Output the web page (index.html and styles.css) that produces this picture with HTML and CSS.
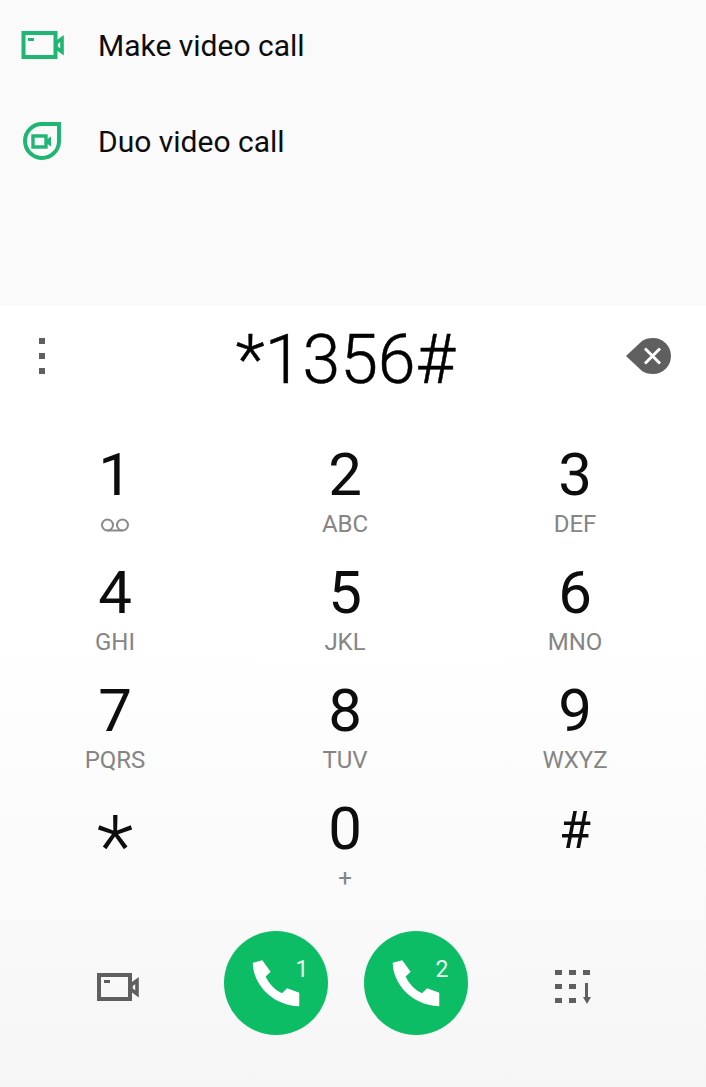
FILE: index.html
```html
<!DOCTYPE html>
<html lang="en">
<head>
    <meta charset="UTF-8">
    <meta name="viewport" content="width=device-width, initial-scale=1.0">
    <title>Dialer</title>
    <link rel="stylesheet" href="styles.css">
</head>
<body>
    <main class="phone">
        <section class="suggestions">
            <div class="suggestion">
                <svg class="suggestion-icon" viewBox="0 0 44 30" width="44" height="30">
                    <rect x="3.5" y="3" width="32" height="24" fill="none" stroke="#1fb573" stroke-width="4"/>
                    <path d="M36 13 L42 8.5 V22 L36 17.5 Z" fill="none" stroke="#1fb573" stroke-width="3.6"/>
                    <rect x="8" y="8" width="6" height="3" fill="#1fb573"/>
                </svg>
                <span>Make video call</span>
            </div>
            <div class="suggestion">
                <svg class="suggestion-icon" viewBox="0 0 44 40" width="44" height="40">
                    <path d="M22 3 H39 V21 A17 17 0 1 1 22 3 Z" fill="none" stroke="#1fb573" stroke-width="4"/>
                    <rect x="13" y="15" width="13" height="11" fill="none" stroke="#1fb573" stroke-width="3.4"/>
                    <path d="M26 19 L31 15.5 V25.5 L26 22 Z" fill="#1fb573"/>
                </svg>
                <span>Duo video call</span>
            </div>
        </section>

        <section class="dialer">
            <div class="number-bar">
                <div class="more-dots"><i></i><i></i><i></i></div>
                <div class="number">*1356#</div>
                <svg class="backspace" viewBox="0 0 46 36" width="46" height="36">
                    <path d="M0 18 L16 3 Q20 0 27 0 A18 18 0 0 1 27 36 Q20 36 16 33 Z" fill="#5f5f5f"/>
                    <path d="M19 10.5 L34 25.5 M34 10.5 L19 25.5" stroke="#fff" stroke-width="3" fill="none"/>
                </svg>
            </div>

            <div class="keypad">
                <div class="key">
                    <span class="digit">1</span>
                    <svg class="voicemail" viewBox="0 0 30 14" width="30" height="14">
                        <circle cx="7.5" cy="7" r="5.5" fill="none" stroke="#8a8a8a" stroke-width="2"/>
                        <circle cx="22.5" cy="7" r="5.5" fill="none" stroke="#8a8a8a" stroke-width="2"/>
                        <path d="M7.5 12.5 H22.5" stroke="#8a8a8a" stroke-width="2"/>
                    </svg>
                </div>
                <div class="key"><span class="digit">2</span><span class="letters">ABC</span></div>
                <div class="key"><span class="digit">3</span><span class="letters">DEF</span></div>
                <div class="key"><span class="digit">4</span><span class="letters">GHI</span></div>
                <div class="key"><span class="digit">5</span><span class="letters">JKL</span></div>
                <div class="key"><span class="digit">6</span><span class="letters">MNO</span></div>
                <div class="key"><span class="digit">7</span><span class="letters">PQRS</span></div>
                <div class="key"><span class="digit">8</span><span class="letters">TUV</span></div>
                <div class="key"><span class="digit">9</span><span class="letters">WXYZ</span></div>
                <div class="key"><span class="digit star">*</span></div>
                <div class="key"><span class="digit">0</span><span class="letters">+</span></div>
                <div class="key"><span class="digit hash">#</span></div>
            </div>

            <div class="actions">
                <svg class="action-icon" viewBox="0 0 44 30" width="44" height="30">
                    <rect x="3" y="3" width="31" height="24" fill="none" stroke="#5f5f5f" stroke-width="4"/>
                    <path d="M35 13 L41 8.5 V22 L35 17.5 Z" fill="none" stroke="#5f5f5f" stroke-width="3.6"/>
                    <rect x="8" y="8" width="6" height="3" fill="#5f5f5f"/>
                </svg>
                <div class="call-buttons">
                    <button class="call-btn">
                        <svg viewBox="0 0 24 24" width="62" height="62"><path fill="#fff" d="M6.7 3.2 L3 4.2 C3 11.5 9.6 20.6 21 21 V15.8 L16.3 14 L14.3 16 C11.4 14.6 9.3 12.3 8 9.5 L9.9 7.6 Z"/></svg>
                        <span class="sim">1</span>
                    </button>
                    <button class="call-btn">
                        <svg viewBox="0 0 24 24" width="62" height="62"><path fill="#fff" d="M6.7 3.2 L3 4.2 C3 11.5 9.6 20.6 21 21 V15.8 L16.3 14 L14.3 16 C11.4 14.6 9.3 12.3 8 9.5 L9.9 7.6 Z"/></svg>
                        <span class="sim">2</span>
                    </button>
                </div>
                <svg class="action-icon" viewBox="0 0 38 36" width="38" height="36">
                    <g fill="#5f5f5f">
                        <rect x="1" y="1" width="7" height="5"/><rect x="15" y="1" width="7" height="5"/><rect x="29" y="1" width="7" height="5"/>
                        <rect x="1" y="15" width="7" height="5"/><rect x="15" y="15" width="7" height="5"/>
                        <rect x="1" y="29" width="7" height="5"/><rect x="15" y="29" width="7" height="5"/>
                        <rect x="31" y="14" width="3" height="16"/><path d="M29 28 H37 L33 35 Z"/>
                    </g>
                </svg>
            </div>
        </section>
    </main>
</body>
</html>
```

FILE: styles.css
```css
* {
    margin: 0;
    padding: 0;
    box-sizing: border-box;
}

html, body {
    height: 100%;
}

body {
    font-family: Roboto, "Liberation Sans", sans-serif;
    background-color: #fafafa;
    overflow: hidden;
}

.phone {
    display: flex;
    flex-direction: column;
    height: 1087px;
}

.suggestions {
    display: flex;
    flex-direction: column;
    gap: 48px;
    height: 306px;
    padding: 21px 0 0 20px;
    background-color: #fafafa;
}

.suggestion {
    display: flex;
    align-items: center;
    gap: 34px;
    height: 48px;
    font-size: 30px;
    color: #0d0d0d;
}

.suggestion-icon {
    flex: none;
}

.dialer {
    flex: 1;
    display: flex;
    flex-direction: column;
    background: linear-gradient(#fff 0, #fff 40%, #f6f6f6 100%);
}

.number-bar {
    display: flex;
    align-items: center;
    justify-content: space-between;
    height: 100px;
    padding: 0 34px 0 39px;
}

.more-dots {
    display: flex;
    flex-direction: column;
    gap: 9px;
}

.more-dots i {
    display: block;
    width: 6px;
    height: 6px;
    background: #5f5f5f;
}

.number {
    flex: 1;
    text-align: center;
    font-size: 68px;
    font-weight: 300;
    color: #000;
    -webkit-text-stroke: 0.5px #000;
    padding: 7px 0 0 20px;
}

.keypad {
    display: grid;
    grid-template-columns: repeat(3, 230px);
    grid-auto-rows: 118px;
    margin-top: 31px;
}

.key {
    display: flex;
    flex-direction: column;
    align-items: center;
    padding-top: 3px;
}

.digit {
    font-size: 60px;
    line-height: 70px;
    color: #0d0d0d;
}

.star {
    font-size: 86px;
    font-weight: 300;
    line-height: 90px;
    padding-top: 8px;
}

.hash {
    font-size: 52px;
    padding-top: 2px;
}

.letters {
    font-size: 24px;
    line-height: 28px;
    color: #858585;
}

.voicemail {
    margin-top: 8px;
}

.actions {
    display: flex;
    align-items: center;
    justify-content: space-between;
    padding: 0 114px 0 96px;
    margin-top: 22px;
}

.call-buttons {
    display: flex;
    gap: 36px;
    margin-right: 3px;
}

.action-icon {
    margin-top: 8px;
}

.call-btn {
    display: flex;
    align-items: center;
    justify-content: center;
    position: relative;
    width: 104px;
    height: 104px;
    border: none;
    border-radius: 50%;
    background: #0dbd66;
}

.sim {
    position: absolute;
    top: 25px;
    right: 19px;
    font-family: Roboto, sans-serif;
    font-size: 23px;
    color: #e8f8ef;
}
```
